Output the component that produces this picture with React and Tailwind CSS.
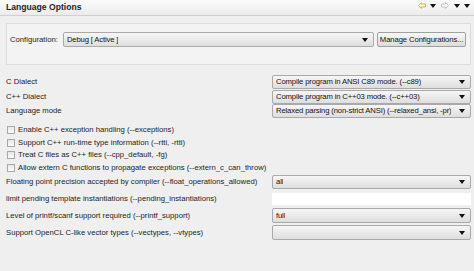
import React from "react";

// small black dropdown triangle used by the combo boxes
const Caret = () => (
  <svg width="6" height="4" viewBox="0 0 6 4" className="shrink-0">
    <path d="M0 0 L6 0 L3 4 Z" fill="#111" />
  </svg>
);

const Combo = ({ value, className = "" }) => (
  <div
    className={`flex items-center justify-between rounded-[2px] border border-[#a9a9a9] bg-gradient-to-b from-[#f6f6f6] to-[#dedede] pl-[3px] pr-[5px] text-[#111] ${className}`}
  >
    <span className="truncate leading-[10px] tracking-[-0.15px]">{value}</span>
    <Caret />
  </div>
);

const Check = ({ label }) => (
  <div className="flex h-[12.5px] items-center gap-[3px]">
    <div className="ml-[1px] h-[8px] w-[8px] border border-[#a8a8a8] bg-gradient-to-b from-[#e8e8e8] to-[#fafafa]" />
    <span className="leading-[10px]">{label}</span>
  </div>
);

const Row = ({ label, children, className = "" }) => (
  <div className={`flex items-center ${className}`}>
    <span className="flex-1 truncate leading-[10px]">{label}</span>
    <div className="w-[199px]">{children}</div>
  </div>
);

export default function App() {
  const checks = [
    "Enable C++ exception handling (--exceptions)",
    "Support C++ run-time type information (--rtti, -rtti)",
    "Treat C files as C++ files (--cpp_default, -fg)",
    "Allow extern C functions to propagate exceptions (--extern_c_can_throw)",
  ];

  return (
    <div
      className="h-[271px] w-[474px] overflow-hidden bg-[#efefef] text-[7.7px] leading-none text-[#1c1c1c]"
      style={{ fontFamily: '"Liberation Sans", Arial, sans-serif' }}
    >
      {/* header */}
      <div className="flex h-[16px] items-start justify-between border-b border-[#cfcfcf] bg-gradient-to-b from-[#fbfbfb] to-[#ececec] pl-[6px] pr-[4px]">
        <span className="mt-[3px] text-[8.6px] font-bold text-[#222]">Language Options</span>
        <div className="mt-[2px] flex items-center">
          <svg width="8" height="7" viewBox="0 0 8 7">
            <path d="M0.5 3.5 L3.5 0.5 L3.5 2 L7.5 2 L7.5 5 L3.5 5 L3.5 6.5 Z" fill="#fff6c8" stroke="#d9a520" strokeWidth="0.8" />
          </svg>
          <div className="ml-[4px]"><Caret /></div>
          <svg width="8" height="7" viewBox="0 0 8 7" className="ml-[5px]">
            <path d="M7.5 3.5 L4.5 0.5 L4.5 2 L0.5 2 L0.5 5 L4.5 5 L4.5 6.5 Z" fill="#f8f8f8" stroke="#b8b8b8" strokeWidth="0.8" />
          </svg>
          <div className="ml-[5px]"><Caret /></div>
          <div className="ml-[4px]"><Caret /></div>
        </div>
      </div>

      <div className="pl-[6px] pr-[3px]">
        {/* configuration group */}
        <div className="mt-[7px] flex h-[42px] items-start border border-[#dcdcdc] bg-[#f3f3f3] pl-[3px] pr-[4px] pt-[8px]">
          <span className="mt-[4px] w-[53px]">Configuration:</span>
          <Combo value="Debug  [ Active ]" className="h-[15px] w-[312px]" />
          <button className="ml-[3px] h-[15px] w-[89px] rounded-[2px] border border-[#a0a0a0] bg-gradient-to-b from-[#f8f8f8] to-[#dcdcdc] text-[7.7px] leading-none tracking-[-0.1px] text-[#111]">
            Manage Configurations...
          </button>
        </div>

        <Row label="C Dialect" className="mt-[10px] h-[14px]">
          <Combo value="Compile program in ANSI C89 mode. (--c89)" className="h-[14px]" />
        </Row>
        <Row label="C++ Dialect" className="mt-[1px] h-[14px]">
          <Combo value="Compile program in C++03 mode. (--c++03)" className="h-[14px]" />
        </Row>
        <Row label="Language mode" className="h-[14px]">
          <Combo value="Relaxed parsing (non-strict ANSI) (--relaxed_ansi, -pr)" className="h-[14px]" />
        </Row>

        <div className="mt-[6px]">
          {checks.map((c) => (
            <Check key={c} label={c} />
          ))}
        </div>

        <Row label="Floating point precision accepted by compiler (--float_operations_allowed)" className="mt-[1px] h-[14px]">
          <Combo value="all" className="h-[14px]" />
        </Row>
        <Row label="limit pending template instantiations (--pending_instantiations)" className="mt-[4px] h-[12px]">
          <div className="h-[12px] bg-white" />
        </Row>
        <Row label="Level of printf/scanf support required (--printf_support)" className="mt-[3px] h-[15px]">
          <Combo value="full" className="h-[15px]" />
        </Row>
        <Row label="Support OpenCL C-like vector types (--vectypes, --vtypes)" className="mt-[2px] h-[15px]">
          <Combo value="" className="h-[15px]" />
        </Row>
      </div>
    </div>
  );
}
